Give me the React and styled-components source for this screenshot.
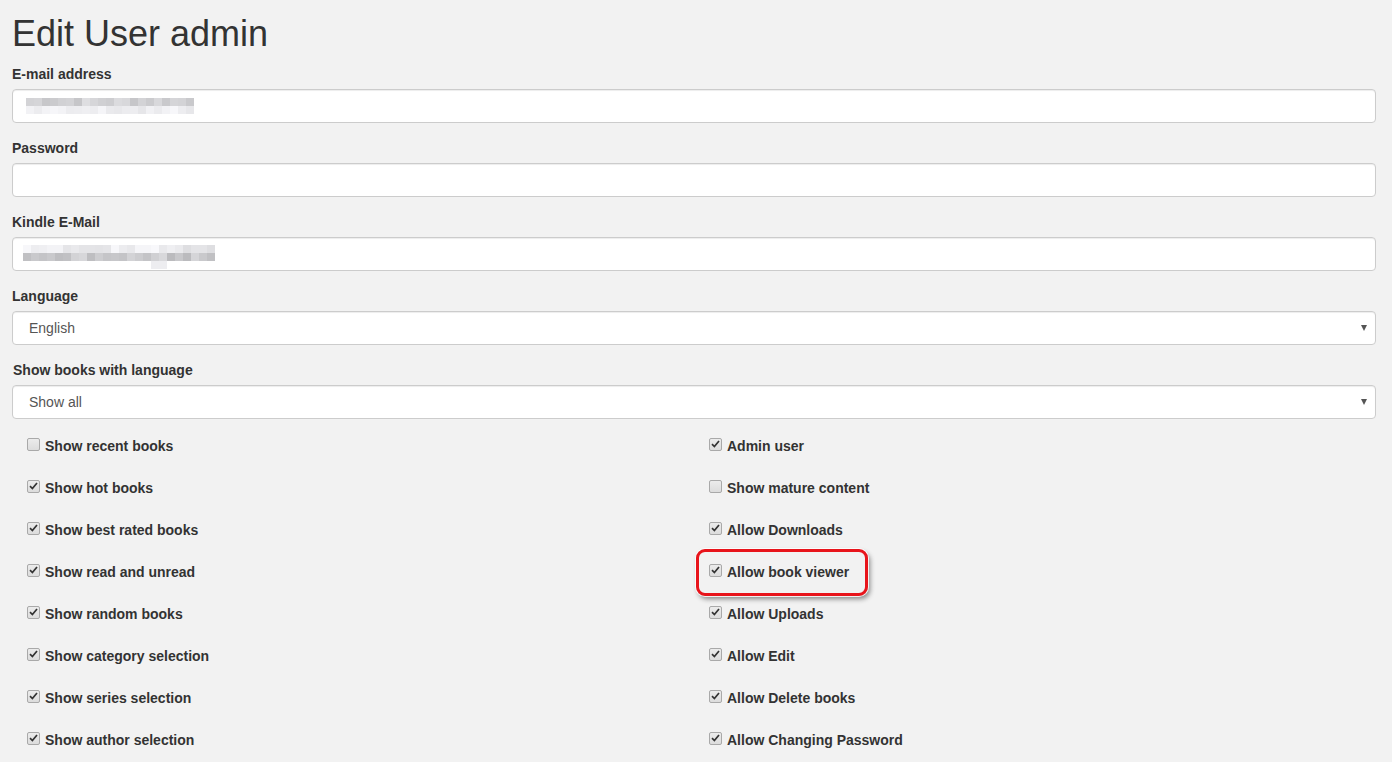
import React from "react";
import styled, { createGlobalStyle } from "styled-components";

const GlobalStyle = createGlobalStyle`
  html, body {
    margin: 0;
    padding: 0;
    background: #f2f2f2;
  }
  body {
    font-family: "Liberation Sans", Arial, Helvetica, sans-serif;
    font-size: 14px;
    line-height: 20px;
    color: #333;
  }
`

const Page = styled.div`
  padding: 0 16px 0 12px;
`

const Title = styled.h1`
  margin: 14px 0 10px;
  font-size: 36px;
  font-weight: 400;
  line-height: 1.1;
  color: #333;
`

const FormGroup = styled.div`
  margin-bottom: 15px;
`

const Label = styled.label`
  display: block;
  margin-bottom: 5px;
  font-weight: 700;
  font-size: 14px;
  line-height: 20px;
  padding-left: ${(p) => (p.$nudge ? "1px" : "0")};
`

const Field = styled.div`
  position: relative;
  height: 34px;
  box-sizing: border-box;
  border: 1px solid #ccc;
  border-radius: 4px;
  background: #fff;
  box-shadow: inset 0 1px 1px rgba(0, 0, 0, 0.075);
  display: flex;
  align-items: center;
  padding: 0 ${(p) => p.$padX || 12}px;
  color: #555;
  font-size: 14px;
`

const Caret = styled.span`
  margin-left: auto;
  margin-right: -8px;
  width: 0;
  height: 0;
  border-left: 3.5px solid transparent;
  border-right: 3.5px solid transparent;
  border-top: 6px solid #555;
`

const MosaicGrid = styled.div`
  display: grid;
  grid-template-columns: repeat(${(p) => p.$cols}, 8px);
  grid-auto-rows: ${(p) => p.$rowH}px;
  margin-top: ${(p) => p.$offset || 0}px;
`

const Cell = styled.span`
  display: block;
`

function grays(seed, count, base, spread) {
  const out = [];
  let s = seed;
  for (let i = 0; i < count; i++) {
    s = (s * 9301 + 49297) % 233280;
    const v = Math.round(base + (s / 233280) * spread);
    out.push(`rgb(${v}, ${v}, ${Math.min(255, v + 3)})`);
  }
  return out;
}

function Mosaic({ cols, rows, seed, rowH = 8, offset }) {
  const cells = [];
  rows.forEach((r, ri) => {
    grays(seed + ri * 31, cols, r.base, r.spread).forEach((c, ci) => {
      const hidden = r.from && ci < r.from ? true : r.to && ci > r.to;
      cells.push(<Cell key={`${ri}-${ci}`} style={{ background: hidden ? "transparent" : c }} />);
    });
  });
  return (
    <MosaicGrid $cols={cols} $rowH={rowH} $offset={offset}>
      {cells}
    </MosaicGrid>
  );
}

const Checks = styled.div`
  display: grid;
  grid-template-columns: 1fr 1fr;
  grid-auto-flow: column;
  grid-template-rows: repeat(8, 20px);
  row-gap: 22px;
  padding-top: 2px;
  padding-bottom: 12px;
`

const CheckItem = styled.div`
  position: relative;
  display: flex;
  align-items: flex-start;
  padding-left: 15px;
  font-weight: 700;
  font-size: 14px;
  line-height: 20px;
  color: #333;
`

const Box = styled.span`
  flex: none;
  width: 11px;
  height: 11px;
  margin: 2px 5px 0 0;
  border: 1px solid #a9a9a9;
  border-radius: 2px;
  background: linear-gradient(#ececec, #dcdcdc);
  display: flex;
  align-items: center;
  justify-content: center;
`

const Highlight = styled.span`
  position: absolute;
  left: 2px;
  top: -13px;
  width: 172px;
  height: 47px;
  box-sizing: border-box;
  border: 3px solid #e8141b;
  border-radius: 9px;
  box-shadow: 0 0 0 1px rgba(255, 255, 255, 0.85), 2px 3px 5px rgba(0, 0, 0, 0.45);
  pointer-events: none;
`

function CheckMark() {
  return (
    <svg width="9" height="8" viewBox="0 0 9 8">
      <path d="M1 4.2 L3.4 6.6 L8 1" fill="none" stroke="#333" strokeWidth="1.7" />
    </svg>
  );
}

function Check({ label, checked, highlight }) {
  return (
    <CheckItem>
      {highlight && <Highlight />}
      <Box>{checked && <CheckMark />}</Box>
      {label}
    </CheckItem>
  );
}

const leftChecks = [
  ["Show recent books", false],
  ["Show hot books", true],
  ["Show best rated books", true],
  ["Show read and unread", true],
  ["Show random books", true],
  ["Show category selection", true],
  ["Show series selection", true],
  ["Show author selection", true],
];

const rightChecks = [
  ["Admin user", true],
  ["Show mature content", false],
  ["Allow Downloads", true],
  ["Allow book viewer", true, true],
  ["Allow Uploads", true],
  ["Allow Edit", true],
  ["Allow Delete books", true],
  ["Allow Changing Password", true],
];

export default function App() {
  return (
    <>
      <GlobalStyle />
      <Page>
        <Title>Edit User admin</Title>

        <FormGroup>
          <Label>E-mail address</Label>
          <Field $padX={13}>
            <Mosaic
              cols={21}
              seed={7}
              rows={[
                { base: 196, spread: 30 },
                { base: 226, spread: 22 },
              ]}
            />
          </Field>
        </FormGroup>

        <FormGroup>
          <Label>Password</Label>
          <Field />
        </FormGroup>

        <FormGroup>
          <Label>Kindle E-Mail</Label>
          <Field $padX={10}>
            <Mosaic
              cols={24}
              seed={19}
              rowH={8}
              offset={6}
              rows={[
                { base: 222, spread: 26 },
                { base: 186, spread: 30 },
                { base: 232, spread: 10, from: 16, to: 17 },
              ]}
            />
          </Field>
        </FormGroup>

        <FormGroup>
          <Label>Language</Label>
          <Field $padX={16}>
            English
            <Caret />
          </Field>
        </FormGroup>

        <FormGroup>
          <Label $nudge>Show books with language</Label>
          <Field $padX={16}>
            Show all
            <Caret />
          </Field>
        </FormGroup>

        <Checks>
          {leftChecks.map(([label, checked]) => (
            <Check key={label} label={label} checked={checked} />
          ))}
          {rightChecks.map(([label, checked, hl]) => (
            <Check key={label} label={label} checked={checked} highlight={hl} />
          ))}
        </Checks>
      </Page>
    </>
  );
}
